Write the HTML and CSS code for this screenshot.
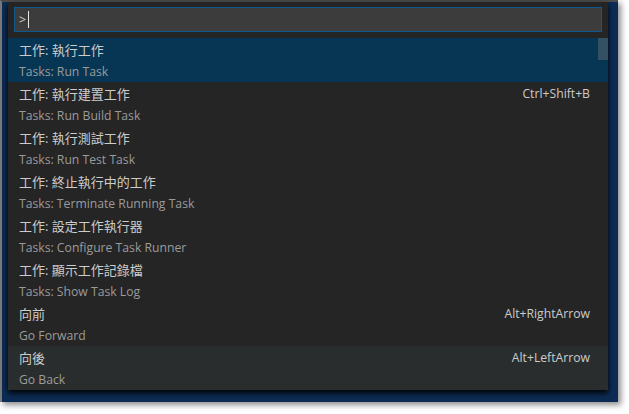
FILE: index.html
```html
<!DOCTYPE html>
<html>
<head>
<meta charset="utf-8">
<link rel="stylesheet" href="styles.css">
</head>
<body>
<div class="window">
  <div class="panel">
    <div class="input"><span class="prompt">&gt;</span><span class="caret"></span></div>
    <div class="list">
      <div class="scrollbar"></div>
      <div class="row selected">
        <div class="line"><span class="label">工作: 執行工作</span></div>
        <div class="desc">Tasks: Run Task</div>
      </div>
      <div class="row">
        <div class="line"><span class="label">工作: 執行建置工作</span><span class="key">Ctrl+Shift+B</span></div>
        <div class="desc">Tasks: Run Build Task</div>
      </div>
      <div class="row">
        <div class="line"><span class="label">工作: 執行測試工作</span></div>
        <div class="desc">Tasks: Run Test Task</div>
      </div>
      <div class="row">
        <div class="line"><span class="label">工作: 終止執行中的工作</span></div>
        <div class="desc">Tasks: Terminate Running Task</div>
      </div>
      <div class="row">
        <div class="line"><span class="label">工作: 設定工作執行器</span></div>
        <div class="desc">Tasks: Configure Task Runner</div>
      </div>
      <div class="row">
        <div class="line"><span class="label">工作: 顯示工作記錄檔</span></div>
        <div class="desc">Tasks: Show Task Log</div>
      </div>
      <div class="row">
        <div class="line"><span class="label">向前</span><span class="key">Alt+RightArrow</span></div>
        <div class="desc">Go Forward</div>
      </div>
      <div class="row hover">
        <div class="line"><span class="label">向後</span><span class="key">Alt+LeftArrow</span></div>
        <div class="desc">Go Back</div>
      </div>
    </div>
  </div>
</div>
</body>
</html>
```
FILE: styles.css
```css
html, body {
  margin: 0;
  padding: 0;
  background: #ffffff;
}
body {
  width: 629px;
  height: 414px;
  overflow: hidden;
  font-family: "Open Sans", "Noto Sans CJK TC", sans-serif;
  font-size: 13px;
}
.window {
  width: 616px;
  height: 400px;
  border-top: 2px solid #4d4d4d;
  border-left: 2px solid #7a7a7a;
  background: #0d2c55;
  box-shadow: 3px 3px 6px rgba(0, 0, 0, 0.45);
  box-sizing: content-box;
}
.panel {
  margin-left: 6px;
  width: 600px;
  height: 388px;
  background: #252526;
  box-shadow: 0 3px 6px #000;
  padding-top: 5px;
  box-sizing: border-box;
}
.input {
  margin: 0 6px;
  height: 25px;
  box-sizing: border-box;
  background: #3c3c3c;
  border: 1px solid #0e5a8f;
  display: flex;
  align-items: center;
  padding-left: 4px;
  color: #cccccc;
}
.prompt {
  font-size: 12.5px;
  line-height: 16px;
}
.caret {
  width: 1px;
  height: 17px;
  background: #e8e8e8;
  margin-left: 2px;
}
.list {
  margin-top: 6px;
  position: relative;
}
.scrollbar {
  position: absolute;
  right: 0;
  top: 0;
  width: 10px;
  height: 22px;
  background: rgba(121, 121, 121, 0.4);
}
.row {
  height: 44px;
  padding-left: 11px;
  padding-right: 18px;
  box-sizing: border-box;
}
.row.selected {
  background: #073655;
}
.row.hover {
  background: #2a2d2e;
}
.line {
  height: 22px;
  display: flex;
  align-items: center;
  justify-content: space-between;
  color: #cccccc;
}
.desc {
  height: 22px;
  box-sizing: border-box;
  padding-top: 2px;
  line-height: 20px;
  color: #9b9b9b;
  font-size: 12.2px;
}
.key {
  color: #cccccc;
  font-size: 12.2px;
}
```
